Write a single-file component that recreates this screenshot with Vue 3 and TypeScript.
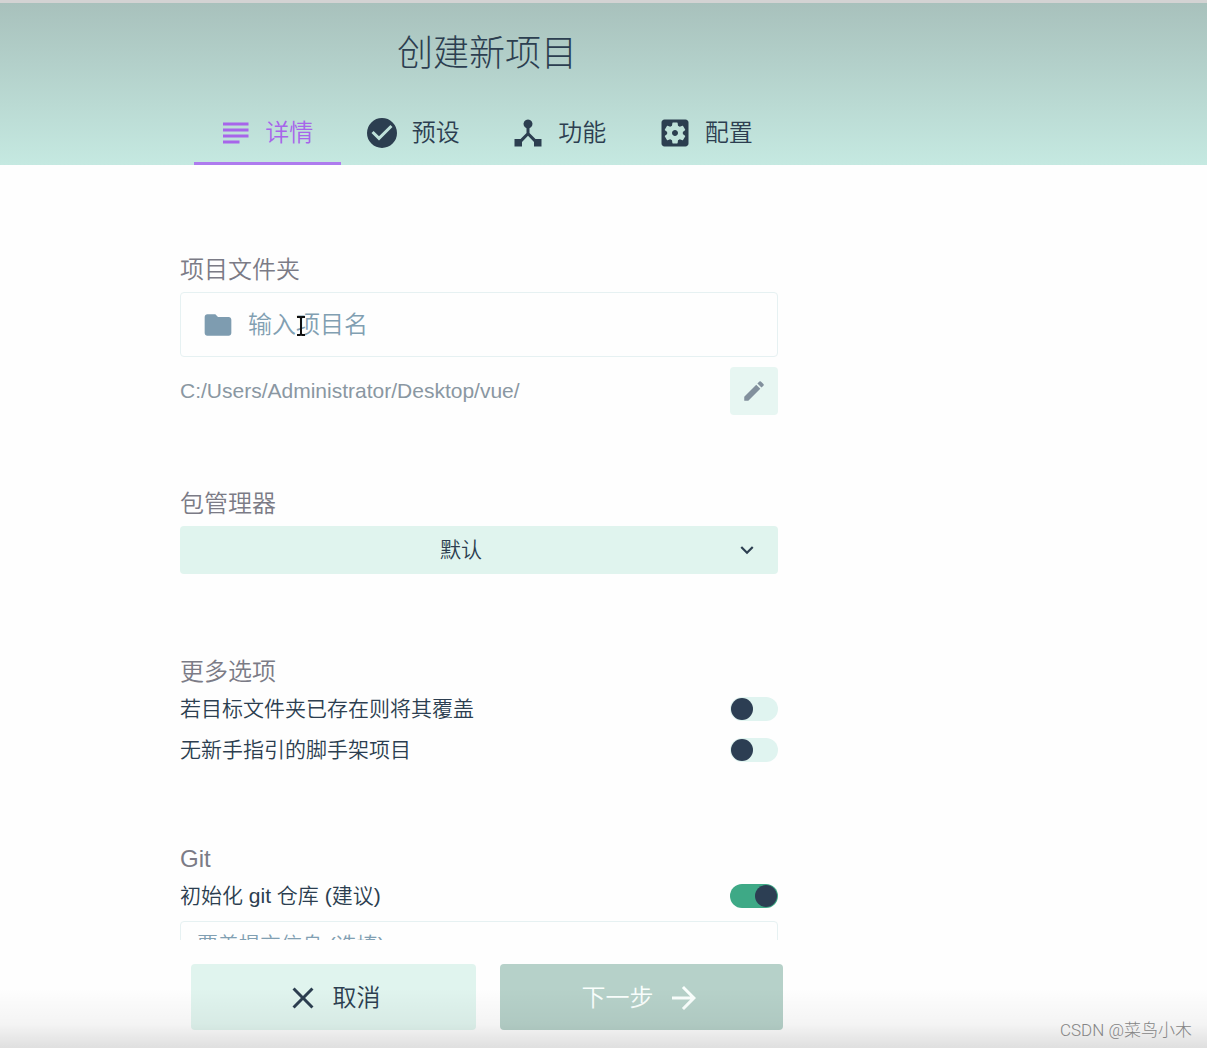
<script setup lang="ts">
import { ref } from 'vue'

interface Tab {
  id: string
  label: string
  icon: string
}

const tabs: Tab[] = [
  { id: 'details', label: '详情', icon: 'M4 5h17v2H4zM4 9h17v2H4zM4 13h17v2H4zM4 17h11v2H4z' },
  {
    id: 'presets',
    label: '预设',
    icon: 'M12 2a10 10 0 1 0 0 20 10 10 0 0 0 0-20zm-2 15-5-5 1.4-1.4 3.6 3.6 7.600-7.600L19 8z',
  },
  {
    id: 'features',
    label: '功能',
    icon: 'M17 16l-4-4V8.820A3 3 0 1 0 11 8.820V12l-4 4H3v5h5v-3.050l4-4.200 4 4.200V21h5v-5z',
  },
  {
    id: 'config',
    label: '配置',
    icon: 'M12 10c-1.100 0-2 .9-2 2s.9 2 2 2 2-.9 2-2-.9-2-2-2zm7-7H5c-1.110 0-2 .9-2 2v14c0 1.100.89 2 2 2h14c1.110 0 2-.9 2-2V5c0-1.100-.89-2-2-2zm-1.750 9c0 .230-.020.460-.050.680l1.480 1.160c.13.11.17.3.080.45l-1.400 2.420c-.09.15-.27.21-.43.15l-1.740-.7c-.36.28-.76.51-1.180.690l-.26 1.850c-.03.170-.18.3-.35.3h-2.800c-.17 0-.32-.13-.35-.29l-.26-1.850c-.43-.18-.82-.41-1.180-.690l-1.740.7c-.16.060-.34 0-.43-.15l-1.400-2.420c-.09-.15-.05-.34.080-.45l1.480-1.160c-.03-.23-.05-.46-.05-.69s.02-.46.05-.68l-1.480-1.160c-.13-.11-.17-.3-.08-.45l1.400-2.420c.09-.15.27-.21.43-.15l1.740.7c.36-.28.76-.51 1.180-.69l.26-1.850c.03-.17.18-.3.35-.3h2.800c.17 0 .32.13.35.29l.26 1.850c.43.18.82.41 1.180.69l1.740-.7c.16-.06.34 0 .43.15l1.400 2.420c.09.15.05.34-.08.45l-1.480 1.160c.03.23.05.46.05.69z',
  },
]

const activeTab = ref('details')
const projectName = ref('')
const packageManager = ref('default')
const overwrite = ref(false)
const bare = ref(false)
const initGit = ref(true)
const commitMessage = ref('')
</script>

<template>
  <div class="project-create">
    <header class="header">
      <h1 class="title">创建新项目</h1>
      <nav class="tabs">
        <button
          v-for="tab in tabs"
          :key="tab.id"
          type="button"
          class="tab"
          :class="{ active: tab.id === activeTab }"
          @click="activeTab = tab.id"
        >
          <svg class="tab-icon" viewBox="0 0 24 24" aria-hidden="true"><path :d="tab.icon" /></svg>
          <span>{{ tab.label }}</span>
        </button>
      </nav>
    </header>

    <main class="content">
      <form class="form" @submit.prevent>
        <section>
          <label class="label" for="project-name">项目文件夹</label>
          <div class="name-field">
            <svg class="folder" viewBox="0 0 24 24" aria-hidden="true">
              <path d="M10 4H4c-1.100 0-2 .9-2 2v12c0 1.100.9 2 2 2h16c1.100 0 2-.9 2-2V8c0-1.100-.9-2-2-2h-8z" />
            </svg>
            <input id="project-name" v-model="projectName" type="text" placeholder="输入项目名" />
            <svg class="caret" viewBox="0 0 10 20" aria-hidden="true">
              <path d="M1 1h3l1 1 1-1h3M5 2v16M1 19h3l1-1 1 1h3" />
            </svg>
          </div>
          <div class="path-row">
            <span class="path">C:/Users/Administrator/Desktop/vue/</span>
            <button type="button" class="edit" aria-label="编辑">
              <svg viewBox="0 0 24 24" aria-hidden="true">
                <path d="M3 17.250V21h3.750L17.810 9.940l-3.750-3.750zM20.710 7.040a1 1 0 0 0 0-1.410l-2.340-2.340a1 1 0 0 0-1.410 0l-1.830 1.830 3.750 3.750z" />
              </svg>
            </button>
          </div>
        </section>

        <section>
          <label class="label" for="package-manager">包管理器</label>
          <div class="select-wrap">
            <select id="package-manager" v-model="packageManager">
              <option value="default">默认</option>
              <option value="npm">npm</option>
              <option value="yarn">Yarn</option>
            </select>
            <svg class="chevron" viewBox="0 0 24 24" aria-hidden="true">
              <path d="M7.410 8.590 12 13.170l4.590-4.580L18 10l-6 6-6-6z" />
            </svg>
          </div>
        </section>

        <section>
          <h2 class="label group-label">更多选项</h2>
          <label class="switch-row">
            <span>若目标文件夹已存在则将其覆盖</span>
            <input v-model="overwrite" class="switch" type="checkbox" />
          </label>
          <label class="switch-row">
            <span>无新手指引的脚手架项目</span>
            <input v-model="bare" class="switch" type="checkbox" />
          </label>
        </section>

        <section>
          <h2 class="label group-label">Git</h2>
          <label class="switch-row">
            <span>初始化 git 仓库 (建议)</span>
            <input v-model="initGit" class="switch" type="checkbox" />
          </label>
          <input
            v-model="commitMessage"
            class="commit"
            type="text"
            placeholder="覆盖提交信息 (选填)"
            aria-label="覆盖提交信息"
          />
        </section>
      </form>
    </main>

    <footer class="footer">
      <div class="actions">
        <button type="button" class="action cancel">
          <svg viewBox="0 0 24 24" aria-hidden="true">
            <path d="M19 6.410 17.590 5 12 10.590 6.410 5 5 6.410 10.590 12 5 17.590 6.410 19 12 13.410 17.590 19 19 17.590 13.410 12z" />
          </svg>
          <span>取消</span>
        </button>
        <button type="button" class="action next" disabled>
          <span>下一步</span>
          <svg viewBox="0 0 24 24" aria-hidden="true">
            <path d="M12 4l-1.410 1.410L16.170 11H4v2h12.170l-5.580 5.590L12 20l8-8z" />
          </svg>
        </button>
      </div>
    </footer>

    <div class="shade"></div>
    <div class="watermark">CSDN @菜鸟小木</div>
  </div>
</template>

<style>
body {
  background: #fefefe;
}
</style>

<style scoped>
.project-create {
  position: relative;
  display: flex;
  flex-direction: column;
  height: 100vh;
  overflow: hidden;
  color: #2c3e50;
  font-family: 'Liberation Sans', 'Noto Sans CJK SC', sans-serif;
  font-weight: 350;
  font-size: 21px;
  line-height: 24px;
}

.project-create *,
.project-create *::before {
  box-sizing: border-box;
}

button,
input,
select {
  margin: 0;
  font: inherit;
  color: inherit;
}

button {
  display: flex;
  align-items: center;
  justify-content: center;
  padding: 0;
  border: 0;
  cursor: pointer;
}

svg {
  flex: none;
  fill: currentColor;
}

.header {
  display: flex;
  flex-direction: column;
  align-items: center;
  padding-right: 233px;
  border-top: 3px solid #d3d3d3;
  background: linear-gradient(#a8c1bc, #c5e9e1);
}

.title {
  margin: 0;
  padding: 26px 0 24px;
  font-size: 36px;
  font-weight: 300;
  line-height: 50px;
}

.tabs {
  display: flex;
  width: 100%;
  max-width: 586px;
}

.tab {
  flex: 1;
  gap: 12px;
  height: 62px;
  padding: 1px 4px 0 0;
  border-bottom: 3px solid transparent;
  background: none;
  font-size: 24px;
}

.tab.active {
  border-bottom-color: #ae7bee;
  color: #a765ea;
}

.tab-icon {
  width: 36px;
  height: 36px;
}

.content {
  flex: 1;
  min-height: 0;
  overflow: hidden;
  padding: 90px 249px 0 0;
}

.form {
  display: flex;
  flex-direction: column;
  gap: 74px;
  max-width: 598px;
  margin: 0 auto;
}

.label {
  display: block;
  margin: 0 0 7px;
  color: #7b7b86;
  font-size: 24px;
  font-weight: 350;
  line-height: 30px;
}

.group-label {
  margin-bottom: 1px;
}

.name-field {
  position: relative;
  display: flex;
  align-items: center;
  gap: 14px;
  height: 65px;
  padding: 0 21px;
  border: 1px solid #e6f1f2;
  border-radius: 4px;
}

.name-field input {
  flex: 1;
  min-width: 0;
  padding: 0;
  border: 0;
  outline: 0;
  background: none;
  font-size: 24px;
}

input::placeholder {
  color: #819fb2;
  opacity: 1;
}

.folder {
  width: 32px;
  height: 32px;
  color: #7e9cb0;
}

.caret {
  position: absolute;
  left: 115px;
  top: 23px;
  width: 10px;
  height: 20px;
  fill: none;
  stroke: #111;
  stroke-width: 2px;
}

.path-row {
  display: flex;
  align-items: center;
  justify-content: space-between;
  margin-top: 10px;
}

.path {
  color: #8a97a2;
}

.edit {
  width: 48px;
  height: 48px;
  border-radius: 4px;
  background: #e7f6f2;
  color: #82909d;
}

.edit svg {
  width: 26px;
  height: 26px;
}

.select-wrap {
  position: relative;
  margin-bottom: 9px;
}

select {
  display: block;
  width: 100%;
  height: 48px;
  padding: 0 36px 0 0;
  border: 0;
  border-radius: 4px;
  appearance: none;
  background: #e0f4ee;
  text-align-last: center;
}

.chevron {
  position: absolute;
  right: 18px;
  top: 11px;
  width: 26px;
  height: 26px;
  pointer-events: none;
}

.switch-row {
  display: flex;
  align-items: center;
  justify-content: space-between;
  height: 41px;
}

.switch {
  width: 48px;
  height: 24px;
  padding: 1px;
  border-radius: 12px;
  appearance: none;
  background: #e0f4f0;
  cursor: pointer;
}

.switch::before {
  content: '';
  display: block;
  width: 22px;
  height: 22px;
  border-radius: 50%;
  background: #2c3e53;
}

.switch:checked {
  background: #3ea986;
}

.switch:checked::before {
  margin-left: auto;
}

.commit {
  display: block;
  width: 100%;
  height: 48px;
  margin-top: 5px;
  padding: 0 16px;
  border: 1px solid #e6f1f2;
  border-radius: 4px;
  background: none;
}

.footer {
  padding: 24px 233px 18px 0;
}

.actions {
  display: flex;
  gap: 24px;
  max-width: 592px;
  margin: 0 auto;
}

.action {
  flex: 1;
  gap: 12px;
  height: 66px;
  padding-top: 2px;
  border-radius: 4px;
  font-size: 24px;
}

.action svg {
  width: 36px;
  height: 36px;
}

.cancel {
  padding-right: 2px;
  background: #e0f4ee;
}

.next {
  background: #b6d1c9;
  color: #fafffd;
}

.shade {
  position: absolute;
  right: 0;
  bottom: 0;
  left: 0;
  height: 60px;
  background: linear-gradient(rgba(0, 0, 0, 0), rgba(0, 0, 0, 0.04) 60%, rgba(0, 0, 0, 0.12));
  pointer-events: none;
}

.watermark {
  position: absolute;
  right: 15px;
  bottom: 6px;
  color: #858585;
  font-family: Roboto, 'Noto Sans CJK SC', sans-serif;
  font-size: 17px;
  font-weight: 300;
  line-height: 24px;
}
</style>
